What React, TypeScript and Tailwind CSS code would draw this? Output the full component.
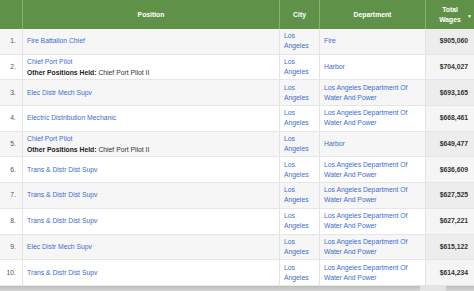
import React from 'react';

type Row = {
  position: string;
  other?: string;
  dept: string;
  wages: string;
};

const rows: Row[] = [
  { position: 'Fire Battalion Chief', dept: 'Fire', wages: '$905,060' },
  { position: 'Chief Port Pilot', other: 'Chief Port Pilot II', dept: 'Harbor', wages: '$704,027' },
  { position: 'Elec Distr Mech Supv', dept: 'Los Angeles Department Of Water And Power', wages: '$693,165' },
  { position: 'Electric Distribution Mechanic', dept: 'Los Angeles Department Of Water And Power', wages: '$668,461' },
  { position: 'Chief Port Pilot', other: 'Chief Port Pilot II', dept: 'Harbor', wages: '$649,477' },
  { position: 'Trans & Distr Dist Supv', dept: 'Los Angeles Department Of Water And Power', wages: '$636,609' },
  { position: 'Trans & Distr Dist Supv', dept: 'Los Angeles Department Of Water And Power', wages: '$627,525' },
  { position: 'Trans & Distr Dist Supv', dept: 'Los Angeles Department Of Water And Power', wages: '$627,221' },
  { position: 'Elec Distr Mech Supv', dept: 'Los Angeles Department Of Water And Power', wages: '$615,122' },
  { position: 'Trans & Distr Dist Supv', dept: 'Los Angeles Department Of Water And Power', wages: '$614,234' },
];

const cols = 'grid grid-cols-[23px_257px_40px_106px_48px]';

function Header() {
  return (
    <div className={`${cols} h-[29px] bg-[#5f9248] text-white font-bold text-[6.8px] leading-[10px]`}>
      <div className="border-r border-[#86b26f]" />
      <div className="flex items-center justify-center border-r border-[#86b26f]">Position</div>
      <div className="flex items-center justify-center border-r border-[#86b26f]">City</div>
      <div className="flex items-center justify-center border-r border-[#86b26f]">Department</div>
      <div className="relative flex items-center justify-center text-center">
        <span>
          Total
          <br />
          Wages
        </span>
        <span className="absolute right-[2px] top-[11px] text-[5px]">▼</span>
      </div>
    </div>
  );
}

function TableRow({ row, index }: { row: Row; index: number }) {
  const odd = index % 2 === 0;
  return (
    <div
      className={`${cols} h-[25.7px] border-b border-[#e6e6e6] ${odd ? 'bg-[#f6f6f6]' : 'bg-white'}`}
    >
      <div className="flex items-center justify-end pr-[6px] text-[#555] border-r border-[#e3e3e3]">
        {index + 1}.
      </div>
      <div className="flex flex-col justify-center pl-[4px] border-r border-[#e3e3e3]">
        <span className="text-[#3d6ccc]">{row.position}</span>
        {row.other && (
          <span className="mt-[1px] text-[#333]">
            <b className="text-[#222]">Other Positions Held:</b> {row.other}
          </span>
        )}
      </div>
      <div className="flex flex-col justify-center pl-[4px] text-[#3d6ccc] border-r border-[#e3e3e3]">
        <span>Los</span>
        <span>Angeles</span>
      </div>
      <div className="flex items-center pl-[4px] pr-[12px] text-[#3d6ccc] border-r border-[#e3e3e3]">
        {row.dept}
      </div>
      <div
        className={`flex items-center justify-end pr-[6px] font-bold text-[#333] ${odd ? 'bg-[#ededed]' : 'bg-[#f5f5f5]'}`}
      >
        {row.wages}
      </div>
    </div>
  );
}

export default function App() {
  return (
    <div
      className="relative h-[291px] w-[474px] overflow-hidden bg-white text-[6.8px] leading-[10px]"
      style={{ fontFamily: '"Liberation Sans", Arial, sans-serif' }}
    >
      <Header />
      {rows.map((row, i) => (
        <TableRow key={i} row={row} index={i} />
      ))}
      {/* horizontal scrollbar strip */}
      <div className="absolute bottom-0 left-0 right-0 h-[5px] bg-gradient-to-b from-[#bdbdbd] to-[#d6d6d6]">
        <div className="absolute left-[420px] top-0 h-full w-[26px] bg-[#e4e4e4]" />
      </div>
    </div>
  );
}
